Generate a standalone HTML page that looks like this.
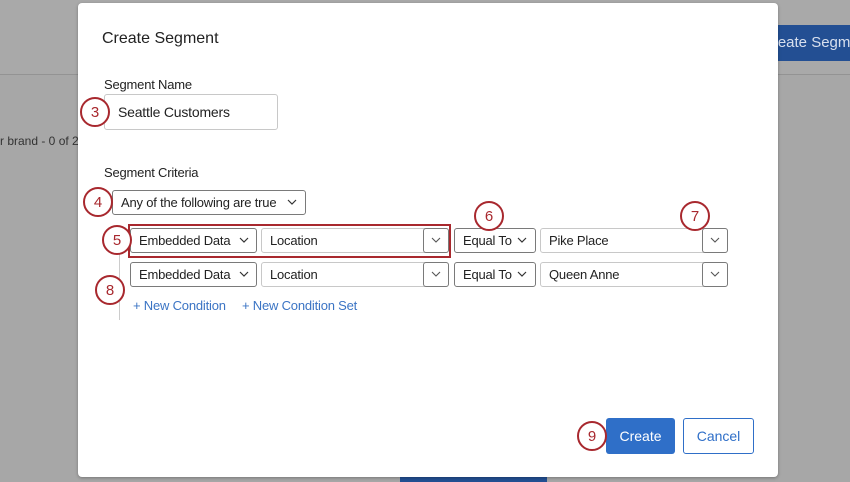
<!DOCTYPE html>
<html><head><meta charset="utf-8"><style>
*{box-sizing:border-box;margin:0;padding:0}
body{width:850px;height:480px;overflow:hidden;background:#a7a7a7;font-family:"Liberation Sans",sans-serif;position:relative;color:#222}
.a{position:absolute;white-space:nowrap}
.box{position:absolute;border:1px solid #7a7a7a;border-radius:3px;background:#fff;font-size:13px;letter-spacing:-0.2px;color:#222;display:flex;align-items:center;padding-left:8px;white-space:nowrap;overflow:hidden}
.soft{border-color:#c8c8c8}
.car{position:absolute;width:10px;height:6px}
.circ{position:absolute;width:30px;height:30px;border:2.5px solid #a8282e;border-radius:50%;background:#fff;color:#a8282e;font-size:15px;display:flex;align-items:center;justify-content:center}
.lbl{position:absolute;font-size:13px;letter-spacing:-0.2px;color:#222;white-space:nowrap}
.link{position:absolute;font-size:13px;letter-spacing:-0.2px;color:#3b74c4;white-space:nowrap}
</style></head><body>
<div class="a" style="left:0;top:0;width:850px;height:75px;background:#a9a9a9;border-bottom:1px solid #939393"></div>
<div class="a" style="left:740px;top:25px;width:110px;height:36px;background:#234f93;color:#d8e0ee;font-size:15px;line-height:36px;padding-left:22px;overflow:hidden">Create Segment</div>
<div class="a" style="left:0;top:134px;font-size:12px;color:#333">r brand - 0 of 2</div>
<div class="a" style="left:400px;top:476px;width:147px;height:6px;background:#234f93"></div>

<div class="a" style="left:78px;top:3px;width:700px;height:474px;background:#fff;border-radius:4px;box-shadow:0 1px 3px rgba(0,0,0,.3)"></div>
<div class="a" style="left:102px;top:30px;font-size:16px;color:#222">Create Segment</div>
<div class="lbl" style="left:104px;top:77px">Segment Name</div>
<div class="box soft" style="left:104px;top:94px;width:174px;height:36px;padding-left:13px;font-size:14px">Seattle Customers</div>
<div class="lbl" style="left:104px;top:165px">Segment Criteria</div>

<div class="box" style="left:112px;top:190px;width:194px;height:25px">Any of the following are true</div>
<svg class="car" style="left:287px;top:199px" viewBox="0 0 10 6"><path d="M1 1l4 4 4-4" fill="none" stroke="#333" stroke-width="1.2"/></svg>

<div class="a" style="left:119px;top:250px;width:1px;height:70px;background:#ccc"></div>

<div class="a" style="left:128px;top:224px;width:323px;height:34px;border:2.5px solid #a8282e"></div>
<div class="box" style="left:130px;top:228px;width:127px;height:25px">Embedded Data</div>
<svg class="car" style="left:239px;top:237px" viewBox="0 0 10 6"><path d="M1 1l4 4 4-4" fill="none" stroke="#333" stroke-width="1.2"/></svg>
<div class="box soft" style="left:261px;top:228px;width:188px;height:25px">Location</div>
<div class="box" style="left:423px;top:228px;width:26px;height:25px"></div>
<svg class="car" style="left:431px;top:237px" viewBox="0 0 10 6"><path d="M1 1l4 4 4-4" fill="none" stroke="#555" stroke-width="1.1"/></svg>
<div class="box" style="left:454px;top:228px;width:82px;height:25px">Equal To</div>
<svg class="car" style="left:517px;top:237px" viewBox="0 0 10 6"><path d="M1 1l4 4 4-4" fill="none" stroke="#333" stroke-width="1.2"/></svg>
<div class="box soft" style="left:540px;top:228px;width:188px;height:25px">Pike Place</div>
<div class="box" style="left:702px;top:228px;width:26px;height:25px"></div>
<svg class="car" style="left:710px;top:237px" viewBox="0 0 10 6"><path d="M1 1l4 4 4-4" fill="none" stroke="#555" stroke-width="1.1"/></svg>

<div class="box" style="left:130px;top:262px;width:127px;height:25px">Embedded Data</div>
<svg class="car" style="left:239px;top:271px" viewBox="0 0 10 6"><path d="M1 1l4 4 4-4" fill="none" stroke="#333" stroke-width="1.2"/></svg>
<div class="box soft" style="left:261px;top:262px;width:188px;height:25px">Location</div>
<div class="box" style="left:423px;top:262px;width:26px;height:25px"></div>
<svg class="car" style="left:431px;top:271px" viewBox="0 0 10 6"><path d="M1 1l4 4 4-4" fill="none" stroke="#555" stroke-width="1.1"/></svg>
<div class="box" style="left:454px;top:262px;width:82px;height:25px">Equal To</div>
<svg class="car" style="left:517px;top:271px" viewBox="0 0 10 6"><path d="M1 1l4 4 4-4" fill="none" stroke="#333" stroke-width="1.2"/></svg>
<div class="box soft" style="left:540px;top:262px;width:188px;height:25px">Queen Anne</div>
<div class="box" style="left:702px;top:262px;width:26px;height:25px"></div>
<svg class="car" style="left:710px;top:271px" viewBox="0 0 10 6"><path d="M1 1l4 4 4-4" fill="none" stroke="#555" stroke-width="1.1"/></svg>

<div class="link" style="left:133px;top:298px">+ New Condition</div>
<div class="link" style="left:242px;top:298px">+ New Condition Set</div>

<div class="a" style="left:606px;top:418px;width:69px;height:36px;background:#2f6fc8;border-radius:3px;color:#fff;font-size:14px;line-height:36px;text-align:center">Create</div>
<div class="a" style="left:683px;top:418px;width:71px;height:36px;border:1px solid #2f6fc8;border-radius:3px;color:#2f6fc8;font-size:14px;line-height:34px;text-align:center">Cancel</div>

<div class="circ" style="left:80px;top:97px">3</div>
<div class="circ" style="left:83px;top:187px">4</div>
<div class="circ" style="left:102px;top:225px">5</div>
<div class="circ" style="left:474px;top:201px">6</div>
<div class="circ" style="left:680px;top:201px">7</div>
<div class="circ" style="left:95px;top:275px">8</div>
<div class="circ" style="left:577px;top:421px">9</div>
</body></html>
